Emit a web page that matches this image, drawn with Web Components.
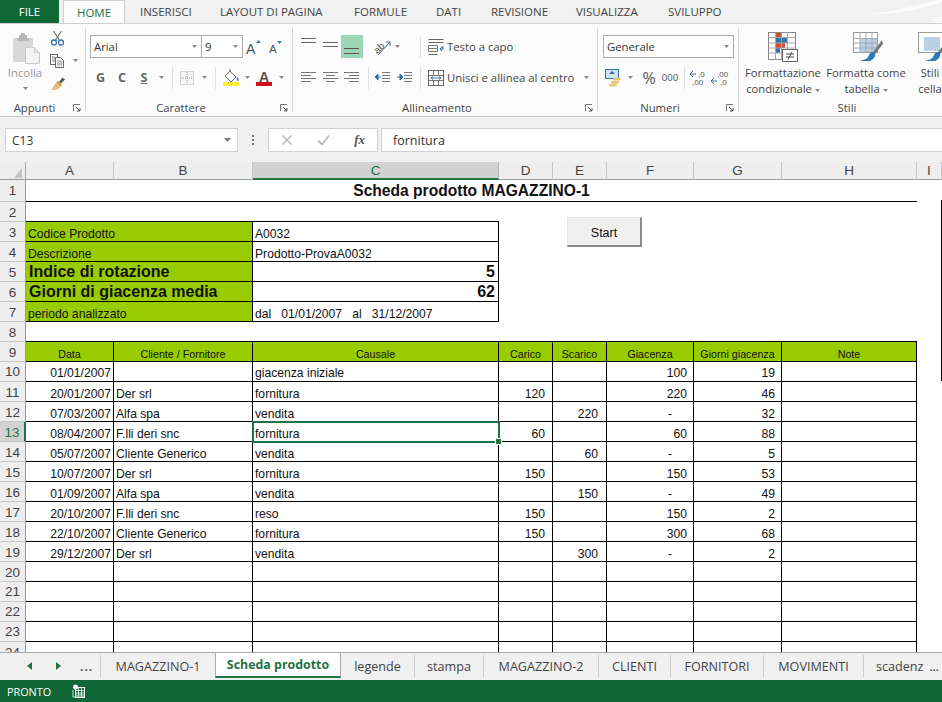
<!DOCTYPE html>
<html lang="it"><head><meta charset="utf-8"><title>Scheda prodotto</title>
<style>html,body{margin:0;padding:0;background:#fff;overflow:hidden}</style></head>
<body><x-app></x-app>
<script>
const lines=(arr,c='#777')=>arr.map(a=>`<path d="M${a[0]} ${a[2]+.5}H${a[1]}" stroke="${c}"/>`).join('');
const IC={
paste:[30,32,`<rect x="1" y="6" width="20" height="24" rx="1" fill="#d8d8d8"/><path d="M7 6V3h2V1h4v2h2v3h2v3H5V6z" fill="#b9b9b9"/><path d="M13.500 15.500h9l5 5v11h-14z" fill="#f4f4f4" stroke="#c8c8c8"/><path d="M22.500 15.500v5h5" fill="#e4e4e4" stroke="#c8c8c8"/>`],
scissors:[15,16,`<path d="M3.500 1l6.500 10M11.500 1L5 11" stroke="#777" stroke-width="1.300" fill="none"/><circle cx="4" cy="12.500" r="2.500" fill="none" stroke="#3a72b0" stroke-width="1.300"/><circle cx="11" cy="12.500" r="2.500" fill="none" stroke="#3a72b0" stroke-width="1.300"/>`],
copy:[15,14,`<path d="M.5.500h7v10h-7z" fill="#fff" stroke="#666"/><path d="M5.500 3.500h5l3 3v7h-8z" fill="#fff" stroke="#666"/><path d="M2 3h3M2 5h3M2 7h3M7 7h5M7 9h5M7 11h5" stroke="#888"/>`],
brush:[16,15,`<path d="M9 6l3.500-4.500 2.500 2L11 7.500z" fill="#555"/><path d="M8 5l4 4-3 3.500c-2 1-5 2-8 1.500 2-1 2-3 3-5z" fill="#e0c07c"/><path d="M8 5l4 4-1.500 1.500-4-4z" fill="#c8a055"/>`],
wrap:[16,16,`<path d="M.5.500h15M.5 3.500h15M.5 15.500h9" stroke="#666"/><path d="M.5 6.500h9v3h-9zM.5 9.500h9v3h-9z" fill="#fff" stroke="#777"/><path d="M15 7v3h-3" fill="none" stroke="#2f6fb0" stroke-width="1.200"/><path d="M12 10l2-2M12 10l2 2" stroke="#2f6fb0"/>`],
merge:[16,16,`<rect x=".5" y=".5" width="15" height="15" fill="#fff" stroke="#666"/><path d="M.5 5.500h15M.5 10.500h15M5.500.5v5M10.500.5v5M5.500 10.500v5M10.500 10.500v5" stroke="#777"/><path d="M3 8h10M3 8l2-1.500M3 8l2 1.500M13 8l-2-1.500M13 8l-2 1.500" stroke="#3a78b5"/>`],
vtop:[16,5,lines([[0,15,0],[0,15,4]],'#666')],
vmid:[16,5,lines([[0,15,0],[0,15,4]],'#666')],
vbot:[16,6,lines([[0,15,0],[0,15,5]],'#555')],
aleft:[16,11,lines([[0,15,0],[0,10,3],[0,15,6],[0,10,9]])],
acenter:[16,11,lines([[0,15,0],[3,12,3],[0,15,6],[3,12,9]])],
aright:[16,11,lines([[0,15,0],[5,15,3],[0,15,6],[5,15,9]])],
orient:[18,16,`<text x="0" y="11" font-family="Liberation Sans,sans-serif" font-size="10" fill="#555" transform="rotate(-42 7 9)">ab</text><path d="M4 16L16 3M16 3h-4M16 3v4" stroke="#4a6f95" fill="none"/>`],
indL:[16,11,lines([[7,15,0],[7,15,3],[7,15,6],[7,15,9]])+`<path d="M0 5h6M0 5l3-3v6z" stroke="#2f6fb0" fill="#2f6fb0"/>`],
indR:[16,11,lines([[7,15,0],[7,15,3],[7,15,6],[7,15,9]])+`<path d="M0 5h6M6 5L3 2v6z" stroke="#2f6fb0" fill="#2f6fb0"/>`],
borders:[14,14,`<rect x=".5" y=".5" width="13" height="13" fill="#f7f7f7" stroke="#aaa" stroke-dasharray="1 1"/><path d="M7 1v12M1 7h12" stroke="#999" stroke-dasharray="1 1"/>`],
fill:[17,18,`<path d="M7 2l6 6-5 5-6-6z" fill="#fff" stroke="#666"/><path d="M7 2V0" stroke="#666"/><path d="M14 8c2 2 2 4 1 4s-2-2-1-4z" fill="#3a78b5"/><rect y="13" width="16" height="4" fill="#ffee33"/>`],
color:[16,18,`<text x="8" y="12.500" text-anchor="middle" font-family="Liberation Sans,sans-serif" font-weight="bold" font-size="14" fill="#555">A</text><rect y="13" width="16" height="4" fill="#d01020"/>`],
grow:[16,14,`<text x="0" y="14" font-family="Liberation Sans,sans-serif" font-size="14" fill="#555">A</text><path d="M10 3l2.500-3 2.500 3z" fill="#3a78b5"/>`],
shrink:[14,13,`<text x="0" y="13" font-family="Liberation Sans,sans-serif" font-size="11.500" fill="#555">A</text><path d="M8 1h5l-2.500 3z" fill="#3a78b5"/>`],
money:[17,18,`<rect x=".5" y=".5" width="13" height="9" fill="#cfe1f2" stroke="#3a78b5"/><path d="M4 5l3-3 3 3z" fill="#2f6fb0"/><ellipse cx="12" cy="10" rx="4" ry="1.500" fill="#e8c66a"/><ellipse cx="10" cy="13" rx="4" ry="1.500" fill="#e8c66a"/><ellipse cx="8" cy="16" rx="4" ry="1.500" fill="#e8c66a"/>`],
incd:[18,15,`<path d="M0 4h6M0 4l3-3M0 4l3 3" stroke="#2f6fb0" fill="none"/><text x="8" y="7" font-family="Liberation Sans,sans-serif" font-size="8" fill="#555">,0</text><text x="2" y="14.500" font-family="Liberation Sans,sans-serif" font-size="8" fill="#555">,00</text>`],
decd:[18,15,`<text x="6" y="7" font-family="Liberation Sans,sans-serif" font-size="8" fill="#555">,00</text><path d="M0 11h6M0 11l3-3M0 11l3 3" stroke="#2f6fb0" fill="none"/><text x="9" y="14.500" font-family="Liberation Sans,sans-serif" font-size="8" fill="#555">,0</text>`],
cond:[30,30,`<rect x=".5" y=".5" width="27" height="27" fill="#fff" stroke="#888"/><rect x="8" y="1" width="6" height="5" fill="#c9523a"/><rect x="8" y="6" width="11" height="5" fill="#3672ab"/><rect x="8" y="11" width="9" height="5" fill="#c9523a"/><rect x="8" y="16" width="4" height="5" fill="#3672ab"/><path d="M.5 5.500h27M.5 11h27M.5 16h27M.5 21h27M7.500.5v27M13.500.5v27M19.500.5v27" stroke="#a8a8a8"/><rect x="14.500" y="17.500" width="15" height="12" fill="#fff" stroke="#666"/><path d="M18 22h8M18 25h8M24 20l-4 7.500" stroke="#444" fill="none"/>`],
table:[30,30,`<rect x=".5" y=".5" width="24" height="20" fill="#fff" stroke="#999"/><rect x="7" y="7" width="17" height="13" fill="#bcd0e6"/><path d="M.5 6.500h24M.5 11h24M.5 16h24M7 .5v20M13 .5v20M19 .5v20" stroke="#a8a8a8"/><path d="M29 8l-9 12 2 2 8-10z" fill="#777"/><path d="M20 20c-3 0-4 3-5 5-1 2-5 3-8 4h10c4-2 6-5 5-8z" fill="#2f78b8"/>`],
cell:[30,30,`<rect x=".5" y=".5" width="24" height="20" fill="#fff" stroke="#999"/><rect x="6" y="5" width="16" height="14" fill="#bcd0e6"/><path d="M29 8l-9 12 2 2 8-10z" fill="#777"/><path d="M20 20c-3 0-4 3-5 5-1 2-5 3-8 4h10c4-2 6-5 5-8z" fill="#2f78b8"/>`],
launch:[8,8,`<path d="M.5 7V.5H7" fill="none" stroke="#777"/><path d="M3 3l4 4M7 4v3H4" fill="none" stroke="#555"/>`],
arrow:[7,4,`<path d="M0 0h7L3.500 4z" fill="#777"/>`],
arrowS:[5,3,`<path d="M0 0h5L2.500 3z" fill="#888"/>`],
x:[12,12,`<path d="M1.500 1.500l9 9M10.500 1.500l-9 9" stroke="#bbb" stroke-width="1.600"/>`],
check:[13,12,`<path d="M1 6.500l4 4 7-9" stroke="#bbb" stroke-width="1.800" fill="none"/>`],
corner:[8,10,`<path d="M8 0v10H0z" fill="#c4c4c4"/>`],
tabL:[5,8,`<path d="M5 0v8L0 4z" fill="#217346"/>`],
tabR:[5,8,`<path d="M0 0v8l5-4z" fill="#217346"/>`],
sheetico:[13,14,`<circle cx="3.500" cy="3" r="2.500" fill="#fff"/><rect x="3.500" y="3.500" width="9" height="10" fill="none" stroke="#fff"/><path d="M1 6v7h12M3.500 6.500h9M3.500 9h9M3.500 11h9M6.500 4v9M9.500 4v9" stroke="#fff" fill="none" stroke-width=".8"/>`]
};
class XIcon extends HTMLElement{constructor(){super();const n=this.getAttribute('name');const d=IC[n];
this.attachShadow({mode:'open'}).innerHTML=`<style>:host{display:inline-flex;flex:none;line-height:0}svg{display:block;overflow:visible}</style><svg width="${d[0]}" height="${d[1]}" viewBox="0 0 ${d[0]} ${d[1]}">${d[2]}</svg>`;}}
customElements.define('x-icon',XIcon);

class XCell extends HTMLElement{constructor(){super();
this.attachShadow({mode:'open'}).innerHTML=`<style>:host{display:flex;flex:none;align-items:center;justify-content:center;height:23px;width:${this.getAttribute('w')||20}px;white-space:nowrap}</style><slot></slot>`;}}
customElements.define('x-cell',XCell);

class XSep extends HTMLElement{constructor(){super();
this.attachShadow({mode:'open'}).innerHTML=`<style>:host{display:block;flex:none;width:1px;height:22px;background:#e1e1e1;margin-left:${this.getAttribute('l')||0}px;margin-right:${this.getAttribute('r')||0}px}</style>`;}}
customElements.define('x-sep',XSep);

class XCombo extends HTMLElement{constructor(){super();
this.attachShadow({mode:'open'}).innerHTML=`<style>:host{display:flex;flex:none;align-items:center;box-sizing:border-box;height:23px;width:${this.getAttribute('w')}px;background:#fff;border:1px solid #ababab;padding:0 4px 0 3px;font:11.300px "Open Sans",sans-serif;color:#333;margin-left:${this.getAttribute('ml')||0}px}span{flex:1}</style><span><slot></slot></span><x-icon name="arrowS"></x-icon>`;}}
customElements.define('x-combo',XCombo);

class XGroup extends HTMLElement{constructor(){super();const w=this.getAttribute('w'),nl=this.hasAttribute('nolaunch'),nb=this.hasAttribute('noborder');
this.attachShadow({mode:'open'}).innerHTML=`<style>
:host{display:flex;flex:none;flex-direction:column;box-sizing:border-box;width:${w}px;height:84px;margin:4px 0;${nb?'':'border-right:1px solid #d6d6d6;'}position:relative}
.b{flex:1;min-height:0}
.f{flex:none;height:16px;margin-bottom:-4px;text-align:center;font:11.300px/16px "Open Sans",sans-serif;color:#444;position:relative;${nl?'':'padding-right:16px;'}}
x-icon{position:absolute;right:4px;top:4px}
</style><div class="b"><slot></slot></div><div class="f">${this.getAttribute('label')}${nl?'':'<x-icon name="launch"></x-icon>'}</div>`;}}
customElements.define('x-group',XGroup);

class XBig extends HTMLElement{constructor(){super();
this.attachShadow({mode:'open'}).innerHTML=`<style>:host{display:flex;flex:none;flex-direction:column;align-items:center;width:${this.getAttribute('w')}px;padding-top:4px;font:11.200px/16px "Open Sans",sans-serif;color:#444;white-space:nowrap;text-align:center}
.i{height:30px;margin-bottom:3px;margin-left:${this.getAttribute('shift')||0}px}</style><div class="i"><x-icon name="${this.getAttribute('icon')}"></x-icon></div><div><slot></slot></div>`;}}
customElements.define('x-big',XBig);

class XTabs extends HTMLElement{constructor(){super();
const t=[['INSERISCI',80],['LAYOUT DI PAGINA',134],['FORMULE',82],['DATI',55],['REVISIONE',85],['VISUALIZZA',92],['SVILUPPO',90]];
this.attachShadow({mode:'open'}).innerHTML=`<style>
:host{display:flex;flex:none;height:24px;box-sizing:border-box;border-bottom:1px solid #cfcfcf;background:#f1f1f1;font:11.500px "Open Sans",sans-serif;color:#444;position:relative;overflow:hidden}
div{display:flex;align-items:center;flex:none;height:23px;white-space:nowrap}
.file{width:59px;justify-content:center;background:#0f6a37;color:#fff;margin-right:4px}
.home{width:62px;box-sizing:border-box;height:24px;justify-content:center;background:#fdfdfd;border:1px solid #cfcfcf;border-bottom:0;color:#217346;margin-right:15px;position:relative;z-index:1}
svg{position:absolute;right:0;top:0}
</style><div class="file">FILE</div><div class="home">HOME</div>${t.map(x=>`<div style="width:${x[1]}px">${x[0]}</div>`).join('')}<svg width="80" height="23" viewBox="0 0 80 23"><path d="M6 14C30 12 60 5 76 0h4v2C60 9 34 15 6 14z" fill="#fbfbfb"/><path d="M66 23c5-3 10-6 14-8v8z" fill="#f7f7f7"/></svg>`;}}
customElements.define('x-tabs',XTabs);

class XRibbon extends HTMLElement{constructor(){super();
this.attachShadow({mode:'open'}).innerHTML=`<style>
:host{display:flex;flex:none;height:93px;box-sizing:border-box;border-bottom:1px solid #c9c9c9;background:#fcfcfc;font:11.300px "Open Sans",sans-serif;color:#444;overflow:hidden}
.row{display:flex;align-items:center;height:23px}
.rows{display:flex;flex-direction:column;gap:8px;padding-top:7px}
.clip{display:flex}
.left{display:flex;flex-direction:column;align-items:center;width:50px;padding-top:4px}
.left .i{height:30px;margin-bottom:3px;margin-left:3px}
.left span{color:#999;line-height:16px}
.left x-icon.a{margin-top:6px}
.small{display:flex;flex-direction:column;gap:8px;padding-top:2px}
.small>div{display:flex;align-items:center;height:15px}
.g{font:bold 12.500px "Open Sans",sans-serif;color:#666}
.u{text-decoration:underline}
.active{background:#9fd5b7}
.t{font-size:11.300px}
.gap{width:3px;flex:none}
.sp{flex:none}
.pc{font-size:16px;color:#555}.th{font-size:9.500px;color:#555}
</style>
<x-group w="86" label="Appunti"><div class="clip">
 <div class="left"><div class="i"><x-icon name="paste"></x-icon></div><span>Incolla</span><x-icon class="a" name="arrowS"></x-icon></div>
 <div class="small"><div><x-icon name="scissors"></x-icon></div><div><x-icon name="copy"></x-icon><x-icon name="arrowS" style="margin-left:8px"></x-icon></div><div><x-icon name="brush"></x-icon></div></div>
</div></x-group>
<x-group w="207" label="Carattere"><div class="rows" style="padding-left:4px">
 <div class="row"><x-combo w="112">Arial</x-combo><x-combo w="42" ml="-1">9</x-combo><x-cell w="22"><x-icon name="grow"></x-icon></x-cell><x-cell w="22"><x-icon name="shrink"></x-icon></x-cell></div>
 <div class="row"><x-cell w="21" class="g">G</x-cell><x-cell w="22" class="g">C</x-cell><x-cell w="22" class="g"><span class="u">S</span></x-cell><x-cell w="12"><x-icon name="arrowS"></x-icon></x-cell><x-sep l="5" r="4"></x-sep><x-cell w="20"><x-icon name="borders"></x-icon></x-cell><x-cell w="14"><x-icon name="arrowS"></x-icon></x-cell><x-sep l="4" r="3"></x-sep><x-cell w="24"><x-icon name="fill"></x-icon></x-cell><x-cell w="8"><x-icon name="arrowS"></x-icon></x-cell><x-cell w="26"><x-icon name="color"></x-icon></x-cell><x-cell w="8"><x-icon name="arrowS"></x-icon></x-cell></div>
</div></x-group>
<x-group w="305" label="Allineamento"><div class="rows" style="padding-left:5px">
 <div class="row"><x-cell w="22"><x-icon name="vtop" style="margin-bottom:12px"></x-icon></x-cell><x-cell w="21"><x-icon name="vmid" style="margin-bottom:4px"></x-icon></x-cell><x-cell w="22" class="active"><x-icon name="vbot" style="margin-top:9px"></x-icon></x-cell><span class="sp" style="width:10px"></span><x-cell w="20"><x-icon name="orient"></x-icon></x-cell><x-cell w="8"><x-icon name="arrowS"></x-icon></x-cell><x-sep l="19" r="7"></x-sep><x-icon name="wrap"></x-icon><span class="gap"></span><span class="t">Testo a capo</span></div>
 <div class="row"><x-cell w="22"><x-icon name="aleft"></x-icon></x-cell><x-cell w="21"><x-icon name="acenter"></x-icon></x-cell><x-cell w="22"><x-icon name="aright"></x-icon></x-cell><x-sep l="5" r="4"></x-sep><x-cell w="20"><x-icon name="indL"></x-icon></x-cell><span class="sp" style="width:1px"></span><x-cell w="22"><x-icon name="indR"></x-icon></x-cell><x-sep l="4" r="7"></x-sep><x-icon name="merge"></x-icon><span class="gap"></span><span class="t" style="width:137px">Unisci e allinea al centro</span><x-icon name="arrowS"></x-icon></div>
</div></x-group>
<x-group w="141" label="Numeri"><div class="rows" style="padding-left:5px">
 <div class="row"><x-combo w="131">Generale</x-combo></div>
 <div class="row"><x-cell w="21"><x-icon name="money"></x-icon></x-cell><x-cell w="12"><x-icon name="arrowS"></x-icon></x-cell><span class="sp" style="width:3px"></span><x-cell w="20" class="pc">%</x-cell><x-cell w="22" class="th">000</x-cell><x-sep l="3" r="3"></x-sep><x-cell w="22"><x-icon name="incd"></x-icon></x-cell><x-cell w="20"><x-icon name="decd"></x-icon></x-cell></div>
</div></x-group>
<x-group w="216" label="Stili" nolaunch noborder><div class="clip">
 <x-big w="88" icon="cond">Formattazione<br>condizionale <x-icon name="arrowS" style="vertical-align:middle"></x-icon></x-big>
 <x-big w="78" icon="table" shift="4">Formatta come<br>tabella <x-icon name="arrowS" style="vertical-align:middle"></x-icon></x-big>
 <x-big w="50" icon="cell" shift="6">Stili<br>cella</x-big>
</div></x-group>`;}}
customElements.define('x-ribbon',XRibbon);

class XFormula extends HTMLElement{constructor(){super();
this.attachShadow({mode:'open'}).innerHTML=`<style>
:host{display:flex;flex:none;align-items:center;box-sizing:border-box;height:45px;padding:11px 0 10px 5px;background:#f0f0f0;font:12px "Open Sans",sans-serif;color:#333}
.box{display:flex;align-items:center;box-sizing:border-box;height:24px;background:#fff;border:1px solid #d0d0d0}
.name{width:233px;padding:0 6px;justify-content:space-between}
.dots{display:flex;flex-direction:column;gap:2px;width:2px;margin:0 14px}
.dots i{display:block;width:2px;height:2px;background:#777}
.btns{width:110px;justify-content:space-between;padding:0 12px 0 12px;margin-right:3px}
.fx{font:italic bold 13px "Liberation Serif",serif;color:#555}
.inp{flex:1;padding-left:11px;border-right:0;font-size:12.500px}
</style><div class="box name"><span>C13</span><x-icon name="arrow"></x-icon></div><div class="dots"><i></i><i></i><i></i></div><div class="box btns"><x-icon name="x"></x-icon><x-icon name="check"></x-icon><span class="fx">fx</span></div><div class="box inp">fornitura</div>`;}}
customElements.define('x-formula',XFormula);

class XSheet extends HTMLElement{constructor(){super();
const cols=[['A',88],['B',139],['C',246],['D',54],['E',54],['F',87],['G',88],['H',135],['I',25]];
let h=`<div class="hd corner"><x-icon name="corner"></x-icon></div>`;
cols.forEach(c=>h+=`<div class="hd col${c[0]=='C'?' sel':''}">${c[0]}</div>`);
const head=(n)=>`<div class="hd rowh${n==13?' sel':''}"${n==1||n==10||n==21||n==22||n==23?' style="padding-top:0"':''}>${n}</div>`;
const c=(t,cls='',span=1,st='')=>`<div class="c ${cls}" style="grid-column:span ${span};${st}">${t}</div>`;
const data={10:['01/01/2007','','giacenza iniziale','','','100','19'],11:['20/01/2007','Der srl','fornitura','120','','220','46'],12:['07/03/2007','Alfa spa','vendita','','220','-','32'],13:['08/04/2007','F.lli deri snc','fornitura','60','','60','88'],14:['05/07/2007','Cliente Generico','vendita','','60','-','5'],15:['10/07/2007','Der srl','fornitura','150','','150','53'],16:['01/09/2007','Alfa spa','vendita','','150','-','49'],17:['20/10/2007','F.lli deri snc','reso','150','','150','2'],18:['22/10/2007','Cliente Generico','fornitura','150','','300','68'],19:['29/12/2007','Der srl','vendita','','300','-','2']};
const blank='<div class="c"></div>';
for(let n=1;n<=24;n++){
 h+=head(n);
 if(n==1){h+=c('Scheda prodotto MAGAZZINO-1','title bb',8)+blank;}
 else if(n==2){h+=c('','bb',3)+c('','',5)+blank;}
 else if(n>=3&&n<=7){
  const big=n==5||n==6;
  const lab={3:'Codice Prodotto',4:'Descrizione',5:'Indice di rotazione',6:'Giorni di giacenza media',7:'periodo analizzato'}[n];
  const val={3:'A0032',4:'Prodotto-ProvaA0032',5:'5',6:'62',7:'dal   01/01/2007   al   31/12/2007'}[n];
  h+=c(lab,'green bb br'+(big?' big':''),2)+c(val,'bb br'+(big?' big r':''),1)+c('','',5)+blank;
 }
 else if(n==8){h+=c('','bb',8)+blank;}
 else if(n==9){['Data','Cliente / Fornitore','Causale','Carico','Scarico','Giacenza','Giorni giacenza','Note'].forEach(t=>h+=c(t,'green bb br hdr'));h+=blank;}
 else{
  const d=data[n]||['','','','','','',''];
  const p=n==10?'padding-bottom:1px;':'';
  h+=c(d[0],'bb br r',1,p)+c(d[1],'bb br',1,p)+c(d[2],'bb br',1,p)+c(d[3],'bb br r',1,p+'padding-right:7px;')+c(d[4],'bb br r',1,p+'padding-right:8px;')
   +c(d[5],'bb br r',1,p+(d[5]=='-'?'padding-right:21px;':'padding-right:6px;'))+c(d[6],'bb br r',1,p+'padding-right:6px;')+c('','bb br')+blank;
 }
}
this.attachShadow({mode:'open'}).innerHTML=`<style>
:host{display:block;flex:1;min-height:0;position:relative;overflow:hidden;background:#fff;font:12.150px "Liberation Sans",sans-serif;color:#111}
.grid{display:grid;grid-template-columns:26px ${cols.map(x=>x[1]+'px').join(' ')};grid-template-rows:18px 22px repeat(23,20px)}
.hd{display:flex;align-items:center;justify-content:center;box-sizing:border-box;background:#eeeeee;color:#444;font-size:13.500px;border-right:1px solid #c6c6c6;border-bottom:1px solid #c6c6c6}
.corner{justify-content:flex-end;padding:4px 3px 0 0;border-right-color:#aaa;border-bottom-color:#9b9b9b}
.col{border-bottom-color:#9b9b9b}
.rowh{border-right-color:#9b9b9b;padding-top:2px}
.col.sel{background:#d2d2d2;color:#217346;border-bottom:2px solid #217346;border-right-color:#bbb}
.rowh.sel{background:#d2d2d2;color:#217346;border-right:2px solid #217346}
.c{display:flex;align-items:flex-end;box-sizing:border-box;padding:0 2px 0;white-space:pre;min-width:0;overflow:hidden}
.bb{border-bottom:1px solid #000}.br{border-right:1px solid #000}
.r{justify-content:flex-end}
.green{background:#99cc00}
.title{justify-content:center;align-items:center;font:bold 15.600px "Liberation Sans",sans-serif;padding:0}
.big{font:bold 16px "Liberation Sans",sans-serif;padding:0 0 0 3px;align-items:center}
.big.r{padding-right:3px}
.hdr{justify-content:center;font-size:10.700px;padding-bottom:1px}
.btn{position:absolute;left:567px;top:55px;box-sizing:border-box;width:75px;height:30px;padding-top:2px;display:flex;align-items:center;justify-content:center;background:#f0f0f0;border-right:2px solid #8a8a8a;border-bottom:2px solid #8a8a8a;border-top:1px solid #e4e4e4;border-left:1px solid #e4e4e4;font-size:12.500px;color:#111}
.selbox{position:absolute;left:252px;top:259px;width:248px;height:22px;box-sizing:border-box;border:2px solid #217346}
.handle{position:absolute;left:496px;top:277px;width:5px;height:5px;background:#217346;outline:1px solid #fff}
.edge{position:absolute;left:941px;top:38px;width:1px;height:181px;background:#000}
</style><div class="grid">${h}</div><div class="btn">Start</div><div class="selbox"></div><div class="handle"></div><div class="edge"></div>`;}}
customElements.define('x-sheet',XSheet);

class XSheetTabs extends HTMLElement{constructor(){super();
this.attachShadow({mode:'open'}).innerHTML=`<style>
:host{display:flex;flex:none;align-items:stretch;height:28px;box-sizing:border-box;background:#f0f0f0;border-top:1px solid #ababab;font:12.600px "Open Sans",sans-serif;color:#444;overflow:hidden}
.nav{display:flex;align-items:center;width:100px;flex:none;padding-left:27px;box-sizing:border-box;margin-top:2px;height:22px}
.nav x-icon:nth-child(2){margin-left:24px}
.nav b{margin-left:19px;font-weight:bold;letter-spacing:1px;color:#555;font-size:12px}
.t{display:flex;align-items:center;justify-content:center;flex:none;box-sizing:border-box;height:22px;margin-top:2px;border-left:1px solid #ccc;white-space:nowrap}
.a{width:126px;height:26px;margin:-1px 0 0;background:#fff;border:1px solid #ababab;border-top:0;border-bottom:2px solid #217346;color:#217346;font-weight:700;font-size:12.400px}
.n{border-left:0}
.end{display:flex;align-items:center;margin-top:2px;height:22px;border-left:1px solid #ccc;padding-left:12px;gap:6px;white-space:nowrap}
.end b{letter-spacing:0;color:#555;font-size:11px}
</style><div class="nav"><x-icon name="tabL"></x-icon><x-icon name="tabR"></x-icon><b>...</b></div>
<div class="t" style="width:115px">MAGAZZINO-1</div><div class="t a">Scheda prodotto</div><div class="t n" style="width:73px">legende</div>
<div class="t" style="width:69px">stampa</div><div class="t" style="width:115px">MAGAZZINO-2</div><div class="t" style="width:72px">CLIENTI</div><div class="t" style="width:93px">FORNITORI</div><div class="t" style="width:100px">MOVIMENTI</div><div class="end">scadenz<b>...</b></div>`;}}
customElements.define('x-sheet-tabs',XSheetTabs);

class XStatus extends HTMLElement{constructor(){super();
this.attachShadow({mode:'open'}).innerHTML=`<style>:host{display:flex;flex:none;align-items:center;height:22px;padding-left:7px;background:#0f6735;color:#fff;font:10.800px "Open Sans",sans-serif}x-icon{margin-left:21px}</style><span>PRONTO</span><x-icon name="sheetico"></x-icon>`;}}
customElements.define('x-status',XStatus);

class XApp extends HTMLElement{constructor(){super();
this.attachShadow({mode:'open'}).innerHTML=`<style>:host{display:flex;flex-direction:column;width:942px;height:702px;overflow:hidden}</style><x-tabs></x-tabs><x-ribbon></x-ribbon><x-formula></x-formula><x-sheet></x-sheet><x-sheet-tabs></x-sheet-tabs><x-status></x-status>`;}}
customElements.define('x-app',XApp);
</script></body></html>
